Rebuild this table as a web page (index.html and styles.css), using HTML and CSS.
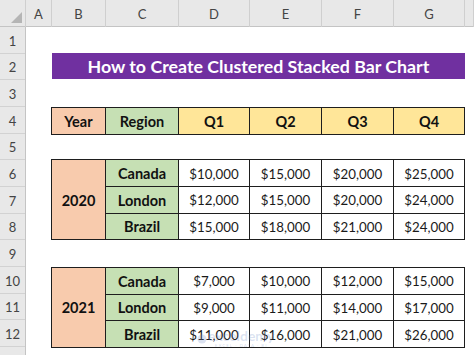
FILE: index.html
```html
<!DOCTYPE html>
<html lang="en">
<head>
<meta charset="utf-8">
<title>How to Create Clustered Stacked Bar Chart</title>
<link rel="stylesheet" href="styles.css">
</head>
<body>
<div class="sheet">
  <div class="colheads">
    <div class="corner"><svg width="26" height="27" viewBox="0 0 26 27"><polygon points="22,12 22,23 11,23" fill="#b5b5b5"/></svg></div>
    <div class="ch">A</div>
    <div class="ch">B</div>
    <div class="ch">C</div>
    <div class="ch">D</div>
    <div class="ch">E</div>
    <div class="ch">F</div>
    <div class="ch">G</div>
    <div class="ch"></div>
  </div>
  <div class="main">
    <div class="rowheads">
      <div class="rh">1</div>
      <div class="rh">2</div>
      <div class="rh">3</div>
      <div class="rh">4</div>
      <div class="rh">5</div>
      <div class="rh">6</div>
      <div class="rh">7</div>
      <div class="rh">8</div>
      <div class="rh">9</div>
      <div class="rh">10</div>
      <div class="rh">11</div>
      <div class="rh">12</div>
      <div class="rh"></div>
    </div>
    <div class="cells">
      <div class="title">How to Create Clustered Stacked Bar Chart</div>

      <div class="tbl head">
        <div class="c peach b">Year</div>
        <div class="c green b">Region</div>
        <div class="c yellow b">Q1</div>
        <div class="c yellow b">Q2</div>
        <div class="c yellow b">Q3</div>
        <div class="c yellow b">Q4</div>
      </div>

      <div class="tbl group g2020">
        <div class="c peach b year">2020</div>
        <div class="c green b">Canada</div>
        <div class="c">$10,000</div>
        <div class="c">$15,000</div>
        <div class="c">$20,000</div>
        <div class="c">$25,000</div>
        <div class="c green b">London</div>
        <div class="c">$12,000</div>
        <div class="c">$15,000</div>
        <div class="c">$20,000</div>
        <div class="c">$24,000</div>
        <div class="c green b">Brazil</div>
        <div class="c">$15,000</div>
        <div class="c">$18,000</div>
        <div class="c">$21,000</div>
        <div class="c">$24,000</div>
      </div>

      <div class="tbl group g2021">
        <div class="c peach b year">2021</div>
        <div class="c green b">Canada</div>
        <div class="c">$7,000</div>
        <div class="c">$10,000</div>
        <div class="c">$12,000</div>
        <div class="c">$15,000</div>
        <div class="c green b">London</div>
        <div class="c">$9,000</div>
        <div class="c">$11,000</div>
        <div class="c">$14,000</div>
        <div class="c">$17,000</div>
        <div class="c green b">Brazil</div>
        <div class="c">$11,000</div>
        <div class="c">$16,000</div>
        <div class="c">$21,000</div>
        <div class="c">$26,000</div>
      </div>

      <div class="watermark">
        <svg class="wm-icon" width="10" height="10" viewBox="0 0 10 10"><circle cx="5" cy="5" r="4.5" fill="rgba(110,140,200,0.25)"/></svg>
        <div class="wm-text">
          <span class="wm-logo">exceldemy</span>
          <span class="wm-sub">EXCEL · DATA · BI</span>
        </div>
      </div>
    </div>
  </div>
</div>
</body>
</html>
```

FILE: styles.css
```css
* { box-sizing: border-box; }

html, body {
  margin: 0;
  padding: 0;
  background: #ffffff;
}

body {
  width: 474px;
  height: 355px;
  overflow: hidden;
  font-family: Lato, "Open Sans", sans-serif;
  color: #1a1a1a;
}

.sheet {
  display: flex;
  flex-direction: column;
}

.colheads {
  display: grid;
  grid-template-columns: 26px 26px 54px 73px 71px 72px 72px 71px 1fr;
  height: 27px;
  background: #e8e8e8;
  border-bottom: 1px solid #c4c4c4;
}

.corner {
  border-right: 1px solid #cfcfcf;
}

.corner svg { display: block; }

.ch {
  display: flex;
  align-items: center;
  justify-content: center;
  font-size: 13px;
  color: #444;
  border-right: 1px solid #cfcfcf;
  padding-top: 1px;
}

.main {
  display: flex;
}

.rowheads {
  width: 26px;
  flex: none;
  background: #e8e8e8;
  border-right: 1px solid #c4c4c4;
  display: grid;
  grid-template-rows: repeat(13, 26.67px);
}

.rh {
  display: flex;
  align-items: center;
  justify-content: center;
  font-size: 13px;
  color: #444;
  border-bottom: 1px solid #d2d2d2;
  padding-top: 2px;
}

.cells {
  position: relative;
  flex: 1;
  display: grid;
  grid-template-rows: repeat(13, 26.67px);
  grid-template-columns: 414px;
  padding-left: 25px;
  align-items: start;
}

.title {
  grid-row: 2;
  margin-left: 1px;
  margin-top: -1px;
  width: 413px;
  height: calc(100% + 0px);
  background: #7030a0;
  color: #ffffff;
  font-weight: 700;
  font-size: 17.8px;
  display: flex;
  align-items: center;
  justify-content: center;
  padding-top: 1px;
}

.tbl {
  display: grid;
  grid-template-columns: 53px 72px 70px 71px 71px 70px;
  gap: 1px;
  padding: 1px;
  background: #1e1e1e;
  width: 414px;
  height: calc(100% + 1px);
}

.head { grid-row: 4; }
.g2020 { grid-row: 6 / 9; grid-template-rows: repeat(3, 1fr); margin-top: -1px; }
.g2021 { grid-row: 10 / 13; grid-template-rows: repeat(3, 1fr); }

.year { grid-row: 1 / 4; }

.c {
  background: #ffffff;
  display: flex;
  align-items: center;
  justify-content: center;
  font-size: 13.3px;
  color: #1a1a1a;
  padding-top: 1px;
}

.b { font-weight: 700; font-size: 14.5px; color: #111; }

.peach { background: #f8cbad; }
.green { background: #c6e0b4; }
.yellow { background: #ffe699; }

.watermark {
  position: absolute;
  left: 171px;
  top: 302px;
  display: flex;
  align-items: center;
  gap: 1px;
  pointer-events: none;
}

.wm-icon { display: block; }

.wm-text {
  display: flex;
  flex-direction: column;
  align-items: center;
}

.wm-logo {
  font-size: 14px;
  font-weight: 700;
  color: rgba(110, 140, 200, 0.25);
  line-height: 14px;
}

.wm-sub {
  font-size: 4.5px;
  letter-spacing: 1px;
  color: rgba(110, 140, 200, 0.3);
  line-height: 5px;
}
```
